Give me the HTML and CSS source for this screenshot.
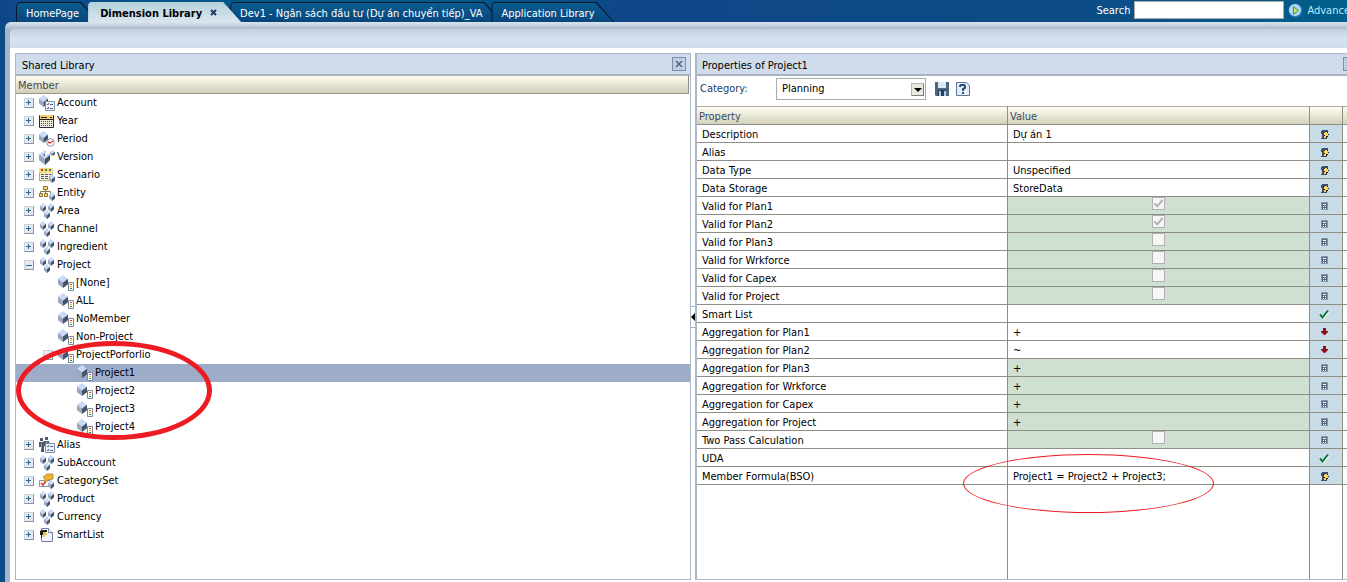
FILE: index.html
```html
<!DOCTYPE html>
<html lang="en">
  <head>
    <meta charset="UTF-8" />
    <meta name="viewport" content="width=device-width, initial-scale=1.0" />
    <title>Dimension Library</title>
    <link rel="stylesheet" href="styles.css">
  </head>
  <body>
    <svg class="sprite" aria-hidden="true">
      <symbol id="cube" viewBox="0 0 10 12" preserveAspectRatio="none">
        <path fill="#c9d9fa" d="M5 0 10 3.500 5 7 0 3.500z" />
        <path fill="#9ba8bb" d="M0 3.500 5 7V12L0 8.500z" />
        <path fill="#42536b" d="M10 3.500 5 7V12L10 8.500z" />
      </symbol>
      <symbol id="generic" viewBox="0 0 16 16">
        <use href="#cube" x="1" y="0" width="6" height="9" />
        <use href="#cube" x="9" y="0" width="6" height="9" />
        <use href="#cube" x="5" y="7" width="6" height="9" />
      </symbol>
      <symbol id="member" viewBox="0 0 16 16">
        <use href="#cube" x="0" y="0" width="10" height="13" />
        <path fill="#fff" stroke="#7b889b" d="M10.500 7.500h5v8h-5z" />
        <path fill="#e33b2e" d="M12 9h2v1h-2z" />
        <path fill="#eeb800" d="M12 11h2v1h-2z" />
        <path fill="#159447" d="M12 13h2v1h-2z" />
      </symbol>
      <symbol id="checklist" viewBox="0 0 10 10">
        <path fill="#eef4ff" stroke="#7f8da5" d="M.5.5h9v9h-9z" />
        <path fill="none" stroke="#4d6285" d="M2 3l1 1 1-2M2 7l1 1 1-2M5 3.500h3M5 7.500h3" />
      </symbol>
      <symbol id="account" viewBox="0 0 16 16">
        <use href="#cube" x="0" y="0" width="9" height="12" />
        <use href="#checklist" x="6" y="6" width="10" height="10" />
      </symbol>
      <symbol id="alias" viewBox="0 0 16 16">
        <path fill="#4b5a6d" d="M1 1h3v3H1zM6 0h3v3H6zM0 5h4l1-1h5l1 4-2 1v5H7v-4L5 9v6H2v-5H0z" />
        <path fill="#8997a8" d="M2 6h1v6H2zM7 4h1v5H7z" />
        <use href="#checklist" x="6" y="6" width="10" height="10" />
      </symbol>
      <symbol id="year" viewBox="0 0 16 16">
        <path fill="#efe9d9" stroke="#222f42" d="M.5 2.500h14v12H.5z" />
        <path fill="#f1cd72" d="M1 2h13v4H1z" />
        <path stroke="#222" d="M2 4.500h6M11 4.500h2M1 6.500h13" />
        <path stroke="#44566d" stroke-dasharray="1 1" d="M2 8.500h11M2 10.500h11M2 12.500h11" />
      </symbol>
      <symbol id="period" viewBox="0 0 16 16">
        <use href="#cube" x="0" y="0" width="9" height="12" />
        <circle cx="11.500" cy="11.500" r="3.800" fill="#fff" stroke="#8792a5" />
        <path fill="none" stroke="#df3a2c" stroke-width="1.500" d="M9 11l2 1 3-2" />
      </symbol>
      <symbol id="version" viewBox="0 0 16 16">
        <path fill="#99a8bc" d="M0 5l6 4v7l-6-5z" />
        <path fill="#3c4d64" d="M6 9l5-4v6l-5 5zM3 5l3-2v4L4 8z" />
        <path fill="#c9d9fa" d="M0 5l6-4 2 2-4 3 2 1 3-2 2 1-5 4z" />
        <use href="#cube" x="11" y="1" width="5" height="6" />
      </symbol>
      <symbol id="scenario" viewBox="0 0 16 16">
        <path fill="#f6f0dc" stroke="#b3a77c" d="M.5 1.500h13v12H.5z" />
        <path fill="#f8df78" d="M0 1h14v5H0z" />
        <path fill="#d5322c" d="M2 2h2v2H2z" />
        <path fill="#1f9a45" d="M6 2h2v2H6z" />
        <path fill="#3d70ce" d="M10 2h2v2h-2z" />
        <path stroke="#4c5b73" stroke-dasharray="3 1" d="M2 7.500h11M2 9.500h11M2 11.500h9" />
        <use href="#cube" x="10" y="7" width="6" height="9" />
      </symbol>
      <symbol id="entity" viewBox="0 0 16 16">
        <path fill="none" stroke="#8a7434" d="M6.500 4v5M1.500 9V6.500h10V9" />
        <path fill="#f5d77c" stroke="#8a7434" d="M4.500 1.500h4v3h-4zM.5 8.500h3v3h-3zM5.500 8.500h3v3h-3z" />
        <use href="#cube" x="10" y="7" width="6" height="9" />
      </symbol>
      <symbol id="category" viewBox="0 0 16 16">
        <path fill="#f3f5fa" stroke="#8a94a8" d="M.5 7.500h11v6H.5z" />
        <path fill="none" stroke="#e0362e" stroke-width="1.500" d="M2 10l2 2 3-4" />
        <path fill="#f0b52c" stroke="#8e6713" stroke-width=".6" d="M4 4l4-3h6v5l-5 1-2 2-2-1 1-3z" />
        <use href="#cube" x="9" y="7" width="6" height="9" />
      </symbol>
      <symbol id="face" viewBox="0 0 8 9">
        <path fill="#3b4e6c" d="M1 0h6v2H4v3H3v4H0V8h1V4H0V1h1zM3 8h3v1H3z" />
        <path fill="#ffd75c" d="M3 3h1V2h2v1h1v3H5v2H3z" />
        <path fill="#221d16" d="M6 2h1v1H6zM7 4h1v1H7zM5 6h2v1H6v1H5zM3 5h1v1H3z" />
      </symbol>
      <symbol id="smartlist" viewBox="0 0 16 16">
        <path fill="#edf3ff" stroke="#7180a0" d="M2.500 1.500h7l4 4v9h-11z" />
        <path fill="#fff" stroke="#7180a0" d="M9.500 1.500v4h4" />
        <path fill="#211c17" d="M1 4l2-1h5v2H4v3H3v3H2V8H1z" />
        <path fill="#efc147" d="M4 5h3v1h1v2H6v2H4z" />
      </symbol>
      <symbol id="calc" viewBox="0 0 7 8">
        <path fill="#56677f" stroke="#8795a8" d="M.5.5h6v7h-6z" />
        <path fill="#fff" d="M2 2h3v1H2zM2 4h1v1H2zM4 4h1v1H4zM2 6h1v1H2zM4 6h1v1H4z" />
      </symbol>
      <symbol id="tick" viewBox="0 0 10 9">
        <path fill="none" stroke="#fff" stroke-width="3" d="M1 5l3 3 5-7" />
        <path fill="none" stroke="#077a3c" stroke-width="2" d="M1 4.500l2.500 3L9 .5" />
      </symbol>
      <symbol id="down" viewBox="0 0 7 7">
        <path fill="#8e1014" d="M2 0h3v3h2v1L4 7H3L0 4V3h2z" />
      </symbol>
    </svg>

    <header class="topbar">
      <nav class="tabs">
        <a class="tab" href="#home">HomePage</a>
        <div class="tab active">
          <a href="#library">Dimension Library</a>
          <button class="tab-close" aria-label="Close tab">
            <svg viewBox="0 0 7 7"><path d="M1 1l5 5M6 1L1 6" stroke="#1d3a61" stroke-width="2" /></svg>
          </button>
        </div>
        <a class="tab" href="#dev1">Dev1 - Ngân sách đầu tư (Dự án chuyển tiếp)_VA</a>
        <a class="tab" href="#application">Application Library</a>
      </nav>
      <form class="search">
        <label for="search">Search</label>
        <input type="text" id="search" />
        <button type="button" class="go" aria-label="Go">
          <svg viewBox="0 0 16 16">
            <circle cx="8" cy="8" r="7.500" fill="#2d6fb5" />
            <circle cx="7.500" cy="7.500" r="6.500" fill="#a9d7f8" />
            <path fill="#c9e96b" stroke="#3c8a22" d="M6 4l5 4-5 4z" />
          </svg>
        </button>
        <a href="#advanced">Advance</a>
      </form>
    </header>

    <div class="shell">
      <div class="toolbar"></div>
      <main class="workspace">
        <section class="panel library">
          <div class="panel-title">
            <h2>Shared Library</h2>
            <button class="panel-close" aria-label="Close panel">
              <svg viewBox="0 0 8 8"><path d="M1 1l6 6M7 1L1 7" stroke="#4f6489" stroke-width="1.500" /></svg>
            </button>
          </div>
          <div class="tree-head">Member</div>
          <ul class="tree">
            <li><div class="node"><button class="toggle plus" aria-label="Expand"></button><svg class="icon"><use href="#account" /></svg><span>Account</span></div></li>
            <li><div class="node"><button class="toggle plus" aria-label="Expand"></button><svg class="icon"><use href="#year" /></svg><span>Year</span></div></li>
            <li><div class="node"><button class="toggle plus" aria-label="Expand"></button><svg class="icon"><use href="#period" /></svg><span>Period</span></div></li>
            <li><div class="node"><button class="toggle plus" aria-label="Expand"></button><svg class="icon"><use href="#version" /></svg><span>Version</span></div></li>
            <li><div class="node"><button class="toggle plus" aria-label="Expand"></button><svg class="icon"><use href="#scenario" /></svg><span>Scenario</span></div></li>
            <li><div class="node"><button class="toggle plus" aria-label="Expand"></button><svg class="icon"><use href="#entity" /></svg><span>Entity</span></div></li>
            <li><div class="node"><button class="toggle plus" aria-label="Expand"></button><svg class="icon"><use href="#generic" /></svg><span>Area</span></div></li>
            <li><div class="node"><button class="toggle plus" aria-label="Expand"></button><svg class="icon"><use href="#generic" /></svg><span>Channel</span></div></li>
            <li><div class="node"><button class="toggle plus" aria-label="Expand"></button><svg class="icon"><use href="#generic" /></svg><span>Ingredient</span></div></li>
            <li>
              <div class="node"><button class="toggle" aria-label="Collapse"></button><svg class="icon"><use href="#generic" /></svg><span>Project</span></div>
              <ul class="level-1">
                <li><div class="node leaf"><svg class="icon"><use href="#member" /></svg><span>[None]</span></div></li>
                <li><div class="node leaf"><svg class="icon"><use href="#member" /></svg><span>ALL</span></div></li>
                <li><div class="node leaf"><svg class="icon"><use href="#member" /></svg><span>NoMember</span></div></li>
                <li><div class="node leaf"><svg class="icon"><use href="#member" /></svg><span>Non-Project</span></div></li>
                <li>
                  <div class="node"><button class="toggle" aria-label="Collapse"></button><svg class="icon"><use href="#member" /></svg><span>ProjectPorforlio</span></div>
                  <ul class="level-2">
                    <li><div class="node leaf selected"><svg class="icon"><use href="#member" /></svg><span>Project1</span></div></li>
                    <li><div class="node leaf"><svg class="icon"><use href="#member" /></svg><span>Project2</span></div></li>
                    <li><div class="node leaf"><svg class="icon"><use href="#member" /></svg><span>Project3</span></div></li>
                    <li><div class="node leaf"><svg class="icon"><use href="#member" /></svg><span>Project4</span></div></li>
                  </ul>
                </li>
              </ul>
            </li>
            <li><div class="node"><button class="toggle plus" aria-label="Expand"></button><svg class="icon"><use href="#alias" /></svg><span>Alias</span></div></li>
            <li><div class="node"><button class="toggle plus" aria-label="Expand"></button><svg class="icon"><use href="#generic" /></svg><span>SubAccount</span></div></li>
            <li><div class="node"><button class="toggle plus" aria-label="Expand"></button><svg class="icon"><use href="#category" /></svg><span>CategorySet</span></div></li>
            <li><div class="node"><button class="toggle plus" aria-label="Expand"></button><svg class="icon"><use href="#generic" /></svg><span>Product</span></div></li>
            <li><div class="node"><button class="toggle plus" aria-label="Expand"></button><svg class="icon"><use href="#generic" /></svg><span>Currency</span></div></li>
            <li><div class="node"><button class="toggle plus" aria-label="Expand"></button><svg class="icon"><use href="#smartlist" /></svg><span>SmartList</span></div></li>
          </ul>
        </section>

        <div class="splitter">
          <button class="splitter-handle" aria-label="Collapse panel">
            <svg viewBox="0 0 4 8"><path d="M4 0v8L0 4z" /></svg>
          </button>
        </div>

        <section class="panel properties">
          <div class="panel-title">
            <h2>Properties of Project1</h2>
            <button class="panel-close" aria-label="Close panel">
              <svg viewBox="0 0 8 8"><path d="M1 1l6 6M7 1L1 7" stroke="#8191ab" stroke-width="1.500" /></svg>
            </button>
          </div>
          <div class="category">
            <label for="category-select">Category:</label>
            <div class="select">
              <select id="category-select">
                <option>Planning</option>
              </select>
              <span class="select-arrow"></span>
            </div>
            <button class="tool" aria-label="Save">
              <svg viewBox="0 0 14 14">
                <path fill="#4a6680" d="M0 0h14v14H1L0 13z" />
                <path fill="#d9e8f4" d="M3 0h8v6H3z" />
                <path fill="#263f58" d="M3 8h8v6H3z" />
                <path fill="#b8cbdc" d="M4 9h2v5H4zM9 9h2v5H9z" />
              </svg>
            </button>
            <button class="tool" aria-label="Help">
              <svg viewBox="0 0 14 14">
                <path fill="#e3edfb" stroke="#5b7698" d="M.5.5h10l3 3v10H.5z" />
                <path fill="none" stroke="#2f4c74" stroke-width="2" d="M4 5V4l1-1h3l1 1v2L7 7v2M7 10v2" />
              </svg>
            </button>
          </div>
          <div class="grid">
            <table>
              <colgroup>
                <col class="col-name" />
                <col />
                <col class="col-source" />
                <col class="col-end" />
              </colgroup>
              <thead>
                <tr><th>Property</th><th>Value</th><th></th><th></th></tr>
              </thead>
              <tbody>
                <tr><td>Description</td><td>Dự án 1</td><td class="source"><svg class="face"><use href="#face" /></svg></td><td></td></tr>
                <tr><td>Alias</td><td></td><td class="source"><svg class="face"><use href="#face" /></svg></td><td></td></tr>
                <tr><td>Data Type</td><td>Unspecified</td><td class="source"><svg class="face"><use href="#face" /></svg></td><td></td></tr>
                <tr><td>Data Storage</td><td>StoreData</td><td class="source"><svg class="face"><use href="#face" /></svg></td><td></td></tr>
                <tr><td><label for="plan1">Valid for Plan1</label></td><td class="locked check"><input type="checkbox" id="plan1" checked disabled /></td><td class="source"><svg class="calc"><use href="#calc" /></svg></td><td></td></tr>
                <tr><td><label for="plan2">Valid for Plan2</label></td><td class="locked check"><input type="checkbox" id="plan2" checked disabled /></td><td class="source"><svg class="calc"><use href="#calc" /></svg></td><td></td></tr>
                <tr><td><label for="plan3">Valid for Plan3</label></td><td class="locked check"><input type="checkbox" id="plan3" disabled /></td><td class="source"><svg class="calc"><use href="#calc" /></svg></td><td></td></tr>
                <tr><td><label for="wrkforce">Valid for Wrkforce</label></td><td class="locked check"><input type="checkbox" id="wrkforce" disabled /></td><td class="source"><svg class="calc"><use href="#calc" /></svg></td><td></td></tr>
                <tr><td><label for="capex">Valid for Capex</label></td><td class="locked check"><input type="checkbox" id="capex" disabled /></td><td class="source"><svg class="calc"><use href="#calc" /></svg></td><td></td></tr>
                <tr><td><label for="project">Valid for Project</label></td><td class="locked check"><input type="checkbox" id="project" disabled /></td><td class="source"><svg class="calc"><use href="#calc" /></svg></td><td></td></tr>
                <tr><td>Smart List</td><td></td><td class="source"><svg class="tick"><use href="#tick" /></svg></td><td></td></tr>
                <tr><td>Aggregation for Plan1</td><td>+</td><td class="source"><svg class="down"><use href="#down" /></svg></td><td></td></tr>
                <tr><td>Aggregation for Plan2</td><td>~</td><td class="source"><svg class="down"><use href="#down" /></svg></td><td></td></tr>
                <tr><td>Aggregation for Plan3</td><td class="locked">+</td><td class="source"><svg class="calc"><use href="#calc" /></svg></td><td></td></tr>
                <tr><td>Aggregation for Wrkforce</td><td class="locked">+</td><td class="source"><svg class="calc"><use href="#calc" /></svg></td><td></td></tr>
                <tr><td>Aggregation for Capex</td><td class="locked">+</td><td class="source"><svg class="calc"><use href="#calc" /></svg></td><td></td></tr>
                <tr><td>Aggregation for Project</td><td class="locked">+</td><td class="source"><svg class="calc"><use href="#calc" /></svg></td><td></td></tr>
                <tr><td><label for="two-pass">Two Pass Calculation</label></td><td class="locked check"><input type="checkbox" id="two-pass" disabled /></td><td class="source"><svg class="calc"><use href="#calc" /></svg></td><td></td></tr>
                <tr><td>UDA</td><td></td><td class="source"><svg class="tick"><use href="#tick" /></svg></td><td></td></tr>
                <tr><td>Member Formula(BSO)</td><td class="formula">Project1 = Project2 + Project3;</td><td class="source"><svg class="face"><use href="#face" /></svg></td><td></td></tr>
                <tr class="filler"><td></td><td></td><td></td><td></td></tr>
              </tbody>
            </table>
          </div>
        </section>
      </main>
    </div>
  </body>
</html>
```

FILE: styles.css
```css
*,
*::before,
*::after {
  margin: 0;
  padding: 0;
  box-sizing: border-box;
}
body {
  font-family: Tahoma, "DejaVu Sans Condensed", "DejaVu Sans", sans-serif;
  font-size: 11px;
  line-height: 14px;
  display: flex;
  flex-direction: column;
  height: 100vh;
  overflow: hidden;
  background: #0d4a88;
  color: #000;
}
button {
  border: none;
  background: none;
  cursor: pointer;
}
svg {
  display: block;
}
ul {
  list-style: none;
}
.sprite {
  position: absolute;
  width: 0;
  height: 0;
}

/* top bar */
.topbar {
  display: flex;
  justify-content: space-between;
  height: 22px;
  padding-left: 16px;
  background: linear-gradient(90deg, #0e4788 0, #03598a 18%, #03598a 34%, #0e4788 46%, #0e4a86 78%, #005f8a 100%);
}
.tabs {
  display: flex;
  padding-top: 2px;
}
.tab {
  position: relative;
  display: flex;
  align-items: center;
  height: 20px;
  padding: 4px 20px 0 10px;
  margin-right: -11px;
  color: #fff;
  text-decoration: none;
  white-space: nowrap;
  background: #06182c;
  border-top-left-radius: 5px;
  clip-path: polygon(0 0, calc(100% - 18px) 0, 100% 100%, 0 100%);
  isolation: isolate;
}
.tab::before {
  content: "";
  position: absolute;
  inset: 1px 1px 0;
  z-index: -1;
  background: linear-gradient(#0a5c8e, #08467c);
  border-top-left-radius: 4px;
  clip-path: polygon(0 0, calc(100% - 18px) 0, 100% 100%, 0 100%);
}
.tab.active {
  z-index: 1;
  padding: 4px 24px 0 12px;
  gap: 8px;
  font-weight: bold;
  background: #b7d3de;
}
.tab.active::before {
  inset: 0;
  background: linear-gradient(#b3d1dc, #dae5ee);
}
.tab.active a {
  color: #000;
  text-decoration: none;
}
.tab-close {
  width: 7px;
  height: 7px;
  margin-bottom: 4px;
}
.search {
  display: flex;
  align-items: center;
  gap: 4px;
  margin-right: -3px;
  color: #fff;
}
.search input {
  width: 150px;
  height: 18px;
  margin-bottom: 2px;
  border: 1px solid #a8aaa4;
  background: #fff;
  font: inherit;
}
.search .go {
  width: 15px;
  height: 15px;
  margin-bottom: 2px;
}
.search .go svg {
  width: 15px;
  height: 15px;
}
.search label,
.search a {
  padding-bottom: 1px;
}
.search a {
  color: #b9ecff;
  text-decoration: none;
}

/* shell */
.shell {
  flex: 1;
  display: flex;
  flex-direction: column;
  margin-left: 5px;
  padding: 7px 0 0 5px;
  min-height: 0;
  background: linear-gradient(#dbe6ee, #a9b9c8 7px, #a8b4cc 8px);
  border-top-left-radius: 6px;
}
.toolbar {
  height: 19px;
  background: linear-gradient(#c3cfde, #d7e2ef 50%, #d0deea);
  border-top-left-radius: 4px;
}
.workspace {
  flex: 1;
  display: flex;
  min-height: 0;
  padding: 5px 0 2px 5px;
  background: #fff;
}
.panel {
  display: flex;
  flex-direction: column;
  min-width: 0;
  border: 1px solid #adb8c6;
}
.library {
  flex: 676 1 0;
}
.properties {
  flex: 652 1 0;
  border-left-width: 2px;
  border-right: none;
}
.panel-title {
  flex: none;
  display: flex;
  align-items: center;
  justify-content: space-between;
  height: 22px;
  padding: 0 4px 0 6px;
  background: #cfdceb;
  border-bottom: 2px solid #aab3c0;
}
.panel-title h2 {
  padding-top: 3px;
  font-size: 11px;
  font-weight: normal;
}
.panel-close {
  display: grid;
  place-items: center;
  width: 14px;
  height: 14px;
  border: 1px solid #7c8eaa;
  background: #c0cfe1;
}
.panel-close svg {
  width: 8px;
  height: 8px;
}
.properties .panel-title {
  padding-left: 5px;
  overflow: hidden;
}
.properties .panel-close {
  margin-right: -14px;
}

/* member tree */
.tree-head {
  flex: none;
  height: 18px;
  margin-right: 1px;
  padding: 3px 2px 0;
  color: #3f4752;
  background: linear-gradient(#fffdf0, #d1cfb9);
  border-right: 1px solid #8e8e80;
  border-bottom: 1px solid #97978a;
}
.node {
  display: flex;
  align-items: center;
  height: 18px;
  padding-left: 8px;
}
.level-1 .node {
  padding-left: 27px;
}
.level-1 .leaf {
  padding-left: 42px;
}
.level-2 .leaf {
  padding-left: 61px;
}
.node.selected {
  background: #9dacc8;
}
.node span {
  margin-left: 2px;
}
.icon {
  width: 16px;
  height: 16px;
}
.toggle {
  width: 10px;
  height: 10px;
  margin-right: 5px;
  border: 1px solid #c9d1de;
  border-right-color: #8793a8;
  border-bottom-color: #8793a8;
  background:
    linear-gradient(#2f6788, #2f6788) 1px 4px / 6px 1px no-repeat,
    #e7ebf1;
}
.toggle.plus {
  background:
    linear-gradient(#2f6788, #2f6788) 1px 3px / 5px 1px no-repeat,
    linear-gradient(#2f6788, #2f6788) 3px 1px / 1px 5px no-repeat,
    #e7ebf1;
}
.level-2 {
  position: relative;
}
/* hand-drawn marker around the portfolio */
.level-2::after {
  content: "";
  position: absolute;
  left: 0;
  top: -23px;
  width: 196px;
  height: 99px;
  border: 5px solid #ed1c24;
  border-radius: 50%;
  pointer-events: none;
}

/* splitter */
.splitter {
  flex: 0 0 4px;
  display: flex;
  align-items: center;
}
.splitter-handle {
  display: grid;
  place-items: center;
  width: 4px;
  height: 22px;
  border-top: 1px solid #9db3cb;
  border-bottom: 1px solid #9db3cb;
}
.splitter-handle svg {
  width: 4px;
  height: 8px;
}

/* properties */
.category {
  flex: none;
  display: flex;
  align-items: center;
  height: 30px;
  padding: 0 3px 4px;
  color: #23406b;
}
.category label {
  width: 76px;
}
.select {
  position: relative;
  width: 150px;
  margin-right: 9px;
}
.select select {
  display: block;
  width: 100%;
  height: 22px;
  padding: 0 5px 1px;
  appearance: none;
  border: 1px solid #a9abab;
  background: #fff;
  color: #000;
  font: inherit;
}
.select-arrow {
  position: absolute;
  right: 2px;
  top: 5px;
  width: 13px;
  height: 13px;
  border: 1px solid #b9b9b4;
  border-right-color: #7d7d78;
  border-bottom-color: #7d7d78;
  background: #ebe9df;
  pointer-events: none;
}
.select-arrow::after {
  content: "";
  position: absolute;
  left: 2px;
  top: 4px;
  border: 4px solid transparent;
  border-top-color: #000;
  border-bottom: none;
}
.tool {
  width: 14px;
  height: 14px;
  margin-right: 7px;
}
.grid {
  flex: 1;
  min-height: 0;
}
table {
  width: 100%;
  height: 100%;
  table-layout: fixed;
  border-spacing: 0;
}
.col-name {
  width: 311px;
}
.col-source {
  width: 33px;
}
.col-end {
  width: 4px;
}
th {
  height: 19px;
  padding: 2px 2px 0;
  text-align: left;
  font-weight: normal;
  line-height: 14px;
  color: #3a4a68;
  background: linear-gradient(#fffef0, #d3d1bb);
  border-top: 1px solid #adada5;
  border-right: 1px solid #8e8e84;
  border-bottom: 1px solid #8e8e84;
}
td {
  height: 18px;
  padding: 3px 5px 0;
  line-height: 14px;
  white-space: nowrap;
  vertical-align: bottom;
  border-right: 1px solid #8e8e84;
  border-bottom: 1px solid #8e8e84;
}
th:last-child,
td:last-child {
  padding: 0;
  border-right: none;
}
.filler td {
  height: auto;
  border-bottom: none;
}
.locked {
  background: #cfdfd2;
}
.source {
  padding: 5px 0 0 11px;
  vertical-align: top;
  background: #cadbe8;
}
.face {
  width: 8px;
  height: 9px;
}
.calc {
  width: 7px;
  height: 8px;
}
.tick {
  width: 10px;
  height: 9px;
  margin-left: -2px;
}
.down {
  width: 7px;
  height: 7px;
}
.check {
  padding: 0;
  vertical-align: top;
  text-align: center;
  line-height: 0;
}
.check input {
  appearance: none;
  position: relative;
  width: 13px;
  height: 13px;
  border: 1px solid #b0b0ac;
  background: #f5f6f5;
}
.check input:checked::after {
  content: "";
  position: absolute;
  left: 3px;
  top: 0;
  width: 5px;
  height: 9px;
  border: solid #b3b3b3;
  border-width: 0 2px 2px 0;
  transform: rotate(40deg);
}
.formula {
  position: relative;
}
/* marker around the formula */
.formula::after {
  content: "";
  position: absolute;
  left: -45px;
  top: -13px;
  width: 251px;
  height: 59px;
  border: 1px solid #ed1c24;
  border-radius: 50%;
  pointer-events: none;
}
```
